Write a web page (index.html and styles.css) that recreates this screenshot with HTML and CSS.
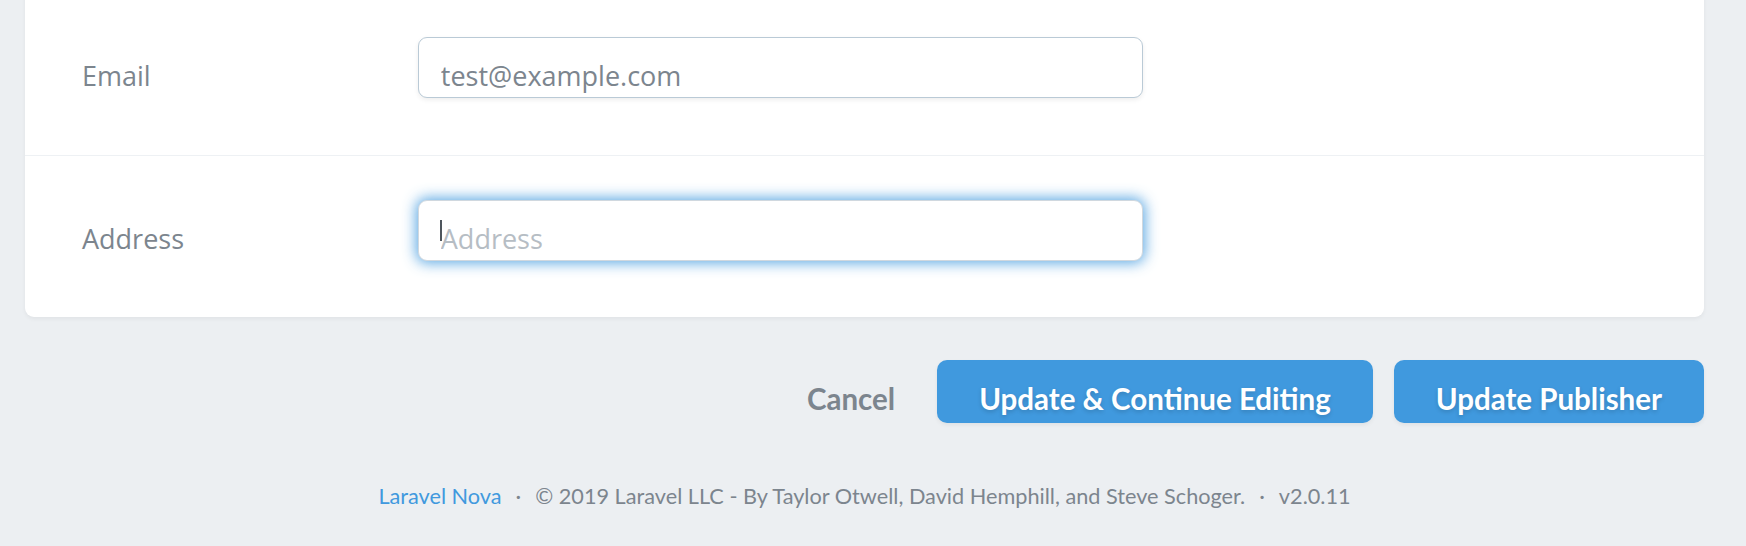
FILE: index.html
```html
<!DOCTYPE html>
<html lang="en">
<head>
<meta charset="utf-8">
<title>Update Publisher</title>
<link rel="stylesheet" href="styles.css">
</head>
<body>
<div class="page">
  <div class="card">
    <div class="row">
      <div class="label-col"><label class="field-label" for="email">Email</label></div>
      <div class="field-col">
        <input id="email" class="form-control" type="text" value="test@example.com">
      </div>
    </div>
    <div class="row">
      <div class="label-col"><label class="field-label" for="address">Address</label></div>
      <div class="field-col">
        <div class="input-wrap">
          <input id="address" class="form-control is-focused" type="text" placeholder="Address">
          <span class="caret"></span>
        </div>
      </div>
    </div>
  </div>
  <div class="actions">
    <button class="btn-link" type="button">Cancel</button>
    <button class="btn-primary" type="button">Update &amp; Continue Editing</button>
    <button class="btn-primary" type="button">Update Publisher</button>
  </div>
  <p class="footer"><a class="footer-link" href="#">Laravel Nova</a><span class="sep">·</span>© 2019 Laravel LLC - By Taylor Otwell, David Hemphill, and Steve Schoger.<span class="sep">·</span>v2.0.11</p>
</div>
</body>
</html>
```

FILE: styles.css
```css
html, body {
  margin: 0;
  padding: 0;
}

body {
  background: #eceff2;
  font-family: "Lato", "Noto Sans", sans-serif;
  color: #7c858e;
  overflow: hidden;
}

.page {
  padding: 0 42px 0 25px;
}

.card {
  margin-top: -6px;
  background: #ffffff;
  border-radius: 0 0 9px 9px;
  box-shadow: 0 2px 4px rgba(0, 0, 0, 0.05);
}

.row {
  display: flex;
  padding: 44px 0 56px;
}

.row:first-child {
  padding-top: 43px;
  padding-bottom: 57px;
}

.row + .row {
  border-top: 1px solid #eef1f4;
}

.label-col {
  width: 20%;
  box-sizing: border-box;
  padding: 23px 0 0 57px;
}

.field-label {
  display: block;
  font-family: "Open Sans", "Lato", sans-serif;
  font-size: 27px;
  line-height: 32px;
  color: #7c858e;
}

.field-col {
  width: 50%;
  box-sizing: border-box;
  padding: 0 57px;
}

.input-wrap {
  position: relative;
}

.form-control {
  display: block;
  width: 100%;
  height: 61px;
  box-sizing: border-box;
  margin: 0;
  padding: 21px 23px 6px 22px;
  border: 1px solid #bacad6;
  border-radius: 9px;
  background: #ffffff;
  font-family: "Open Sans", "Lato", sans-serif;
  font-size: 27px;
  line-height: 32px;
  color: #7c858e;
  box-shadow: 0 2px 5px rgba(0, 0, 0, 0.07);
  outline: none;
}

.form-control::placeholder {
  color: #b6bdc4;
  opacity: 1;
}

.form-control.is-focused {
  border-color: #d0d8df;
  box-shadow: 0 0 14px 2px rgba(64, 153, 222, 0.85);
}

.caret {
  position: absolute;
  left: 22px;
  top: 20px;
  width: 2px;
  height: 21px;
  background: #4f565d;
}

.actions {
  display: flex;
  justify-content: flex-end;
  align-items: center;
  gap: 21px;
  margin-top: 43px;
}

.btn-link,
.btn-primary {
  height: 63px;
  box-sizing: border-box;
  margin: 0;
  border: 0;
  font-family: "Lato", "Noto Sans", sans-serif;
  font-weight: 700;
  font-size: 29.5px;
  line-height: 34px;
  cursor: pointer;
}

.btn-link {
  padding: 15px 0 0;
  margin-right: 21px;
  background: transparent;
  color: #7c858e;
}

.btn-primary {
  padding: 15px 42px 0;
  border-radius: 10px;
  background: #4099de;
  color: #ffffff;
  text-shadow: 0 2px 4px rgba(0, 0, 0, 0.16);
  box-shadow: 0 2px 4px rgba(0, 0, 0, 0.06);
}

.footer {
  margin: 57px 0 0;
  text-align: center;
  font-size: 21.7px;
  line-height: 32px;
  color: #7c858e;
}

.footer-link {
  color: #4099de;
  text-decoration: none;
}

.sep {
  padding: 0 14px;
}
```
